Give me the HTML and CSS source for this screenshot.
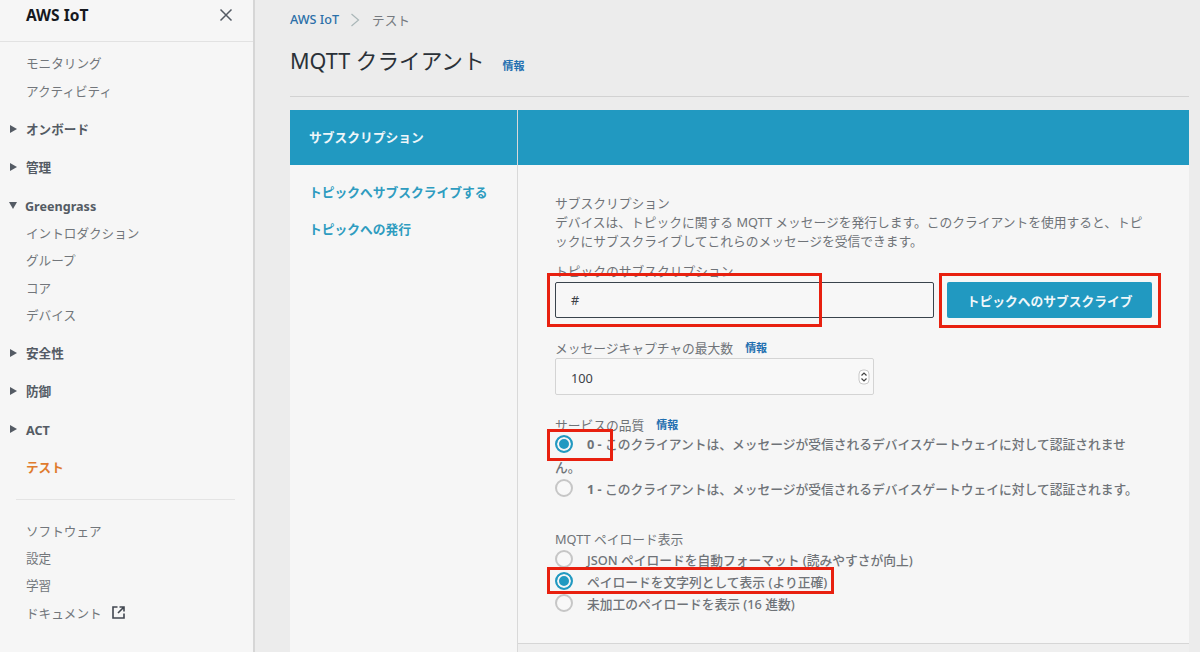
FILE: index.html
```html
<!DOCTYPE html>
<html lang="ja">
<head>
<meta charset="utf-8">
<title>MQTT クライアント</title>
<link rel="stylesheet" href="styles.css">
</head>
<body>
<div class="app">
  <aside class="sidebar">
    <div class="side-head">
      <span class="side-title">AWS IoT</span>
      <svg class="close" width="14" height="14" viewBox="0 0 14 14"><path d="M1.500 1.500l11 11M12.500 1.500l-11 11" stroke="#545b64" stroke-width="1.500" fill="none"/></svg>
    </div>
    <nav class="side-nav">
      <a class="item">モニタリング</a>
      <a class="item">アクティビティ</a>
      <a class="group g-sec"><span class="tri-r"></span>オンボード</a>
      <a class="group g-sec"><span class="tri-r"></span>管理</a>
      <a class="group g-sec"><span class="tri-d"></span><span class="latin">Greengrass</span></a>
      <a class="item">イントロダクション</a>
      <a class="item">グループ</a>
      <a class="item">コア</a>
      <a class="item">デバイス</a>
      <a class="group g-sec"><span class="tri-r"></span>安全性</a>
      <a class="group g-sec"><span class="tri-r"></span>防御</a>
      <a class="group g-sec"><span class="tri-r"></span><span class="latin">ACT</span></a>
      <a class="item active">テスト</a>
      <div class="side-div"></div>
      <a class="item">ソフトウェア</a>
      <a class="item">設定</a>
      <a class="item">学習</a>
      <a class="item">ドキュメント<svg class="ext" width="13" height="13" viewBox="0 0 13 13"><path d="M5.500 1H1v11h11V7.500M7.500 1H12v4.500M12 1L6 7" stroke="#414750" stroke-width="1.600" fill="none"/></svg></a>
    </nav>
  </aside>
  <main class="main">
    <div class="crumbs"><a class="crumb-link">AWS IoT</a><svg class="crumb-sep" width="10" height="14" viewBox="0 0 10 14"><path d="M1.500 1l7 6-7 6" stroke="#aab7b8" stroke-width="1.200" fill="none"/></svg><span class="crumb-cur">テスト</span></div>
    <div class="title-row"><h1 class="title">MQTT クライアント</h1><a class="info info-title">情報</a></div>
    <div class="panel">
      <div class="panel-left">
        <div class="left-head">サブスクリプション</div>
        <div class="left-links">
          <a class="left-link">トピックへサブスクライブする</a>
          <a class="left-link">トピックへの発行</a>
        </div>
      </div>
      <div class="panel-right">
        <div class="right-head"></div>
        <div class="form">
          <div class="f-title">サブスクリプション</div>
          <p class="f-desc">デバイスは、トピックに関する MQTT メッセージを発行します。このクライアントを使用すると、トピックにサブスクライブしてこれらのメッセージを受信できます。</p>
          <div class="f-label l-topic">トピックのサブスクリプション</div>
          <div class="topic-row">
            <div class="input topic-input">#<span class="mark m-input"></span></div>
            <div class="btn">トピックへのサブスクライブ<span class="mark m-btn"></span></div>
          </div>
          <div class="f-label l-max">メッセージキャプチャの最大数<a class="info">情報</a></div>
          <div class="input num-input">100
            <svg class="spin" width="12" height="16" viewBox="0 0 12 16"><rect x="1" y="1" width="10" height="14" rx="4" fill="#fff" stroke="#c9c9c9"/><path d="M3.500 6.500L6 4l2.500 2.500M3.500 9.500L6 12l2.500-2.500" stroke="#444" stroke-width="1.200" fill="none"/></svg>
          </div>
          <div class="f-label l-qos">サービスの品質<a class="info">情報</a></div>
          <div class="radio-wrap q0">
            <span class="radio on"></span><span class="r-text"><b>0 - </b>このクライアントは、メッセージが受信されるデバイスゲートウェイに対して認証されません。</span><span class="mark m-r0"></span>
          </div>
          <div class="radio-row q1"><span class="radio"></span><span class="r-text"><b>1 - </b>このクライアントは、メッセージが受信されるデバイスゲートウェイに対して認証されます。</span></div>
          <div class="f-label l-payload">MQTT ペイロード表示</div>
          <div class="radio-row p-row"><span class="radio"></span><span class="r-text">JSON ペイロードを自動フォーマット (読みやすさが向上)</span></div>
          <div class="radio-row p-row"><span class="radio on"></span><span class="r-text">ペイロードを文字列として表示 (より正確)</span><span class="mark m-r1"></span></div>
          <div class="radio-row p-row"><span class="radio"></span><span class="r-text">未加工のペイロードを表示 (16 進数)</span></div>
        </div>
        <div class="right-foot"></div>
      </div>
    </div>
  </main>
</div>
</body>
</html>
```

FILE: styles.css
```css
* { box-sizing: border-box; }
html, body { margin: 0; padding: 0; height: 652px; overflow: hidden; }
body { font-family: "Noto Sans", "Noto Sans CJK JP", sans-serif; font-size: 12.6px; color: #6b6f74; background: #ececec; }
.app { display: flex; height: 652px; overflow: hidden; }

.sidebar { width: 255px; flex: none; background: #f6f6f6; border-right: 2px solid #d6d6d6; }
.side-head { height: 42px; display: flex; align-items: center; justify-content: space-between; padding: 0 20px 11px 26px; border-bottom: 1px solid #e2e2e2; }
.side-title { font-size: 15.500px; font-weight: 700; color: #16191f; }
.side-nav { display: flex; flex-direction: column; padding-top: 7.300px; }
.item { display: flex; align-items: center; height: 27.300px; padding-left: 26px; color: #72767b; }
.group { display: flex; align-items: center; height: 27.300px; padding-left: 10px; font-weight: 700; color: #545b64; }
.g-sec { margin-top: 11px; }
.latin { padding-top: 3px; }
.tri-r { width: 0; height: 0; border-left: 7px solid #545b64; border-top: 4.500px solid transparent; border-bottom: 4.500px solid transparent; margin-right: 9px; }
.tri-d { width: 0; height: 0; border-top: 7px solid #545b64; border-left: 4.500px solid transparent; border-right: 4.500px solid transparent; margin-right: 8px; margin-left: -1px; }
.active { color: #e07b2e; font-weight: 700; margin-top: 10px; }
.side-div { height: 1px; background: #e4e4e4; margin: 18.700px 18px 16.800px 16px; }
.ext { margin-left: 10px; }

.main { flex: 1; padding: 0 11px 0 35px; min-width: 0; }
.crumbs { display: flex; align-items: center; height: 39px; }
.crumb-link { color: #2a6fa8; font-weight: 500; }
.crumb-sep { margin: 0 12px 0 11px; }
.crumb-cur { color: #767a7f; }
.title-row { display: flex; align-items: center; height: 58px; border-bottom: 1px solid #d2d2d2; padding-bottom: 14px; margin-bottom: 13px; }
.title { margin: 0; font-size: 21.600px; font-weight: 400; color: #2a3138; line-height: 1.2; }
.info { color: #1f6fb0; font-size: 11px; font-weight: 700; margin-left: 13px; }
.info-title { margin-left: 18px; margin-top: 9px; }

.panel { display: flex; width: 899px; height: 542px; overflow: hidden; background: #f6f6f6; font-size: 12.750px; }
.panel-left { width: 227px; flex: none; }
.left-head { height: 55px; background: #2199c1; color: #eef6f9; font-weight: 700; display: flex; align-items: center; padding: 0 0 3px 19px; }
.left-links { display: flex; flex-direction: column; padding: 18px 0 0 19px; gap: 18px; }
.left-link { color: #2e9cc0; font-weight: 700; line-height: 19px; }
.panel-right { flex: 1; min-width: 0; display: flex; flex-direction: column; border-left: 1px solid #d9d9d9; }
.right-head { height: 55px; background: #2199c1; flex: none; }
.form { padding: 29px 37px 0 37px; height: 478px; color: #6f7378; }
.f-title { line-height: 19px; }
.f-desc { margin: 0; line-height: 19px; width: 598px; }
.f-label { line-height: 18px; display: flex; align-items: center; }
.f-label .info { margin-left: 12px; }
.l-topic { margin-top: 13px; height: 14px; }
.topic-row { display: flex; margin-top: 4px; align-items: stretch; gap: 13px; }
.input { position: relative; display: flex; align-items: center; padding-left: 15px; color: #3c4147; }
.topic-input { width: 380px; height: 36px; border: 1px solid #39434c; border-radius: 2px; background: #f7f7f7; }
.btn { position: relative; width: 205px; height: 36px; background: #2199c1; border-radius: 2px; color: #f0f7fa; font-weight: 700; display: flex; align-items: center; justify-content: center; }
.l-max { margin-top: 21px; height: 18px; }
.num-input { margin-top: 1px; width: 319px; height: 37px; border: 1px solid #d4d4d4; border-radius: 2px; background: #f8f8f8; justify-content: space-between; padding: 3px 3px 0 15px; }
.spin { margin-top: -3px; }
.l-qos { margin-top: 21px; height: 18px; }
.radio-wrap { position: relative; display: block; line-height: 23px; width: 585px; margin-top: -1px; }
.radio-wrap .radio { margin-right: 14px; vertical-align: -4px; }
.radio-row { position: relative; display: flex; align-items: center; }
.radio { display: inline-block; width: 18px; height: 18px; flex: none; border: 2px solid #c6c6c6; border-radius: 50%; background: #f8f8f8; margin-right: 14px; }
.radio.on { border-color: #2199c1; background: #2199c1; box-shadow: inset 0 0 0 2px #f6f6f6; }
.r-text { font-weight: 500; }
.r-text b { font-weight: 700; }
.q1 { height: 22px; margin-top: -2px; }
.l-payload { margin-top: 31px; }
.p-row { height: 22px; }
.right-foot { flex: 1; background: #efefef; border-top: 1px solid #d6d6d6; }

.mark { position: absolute; border: 3px solid #e8200f; pointer-events: none; }
.m-input { left: -9px; top: -10px; width: 275px; height: 54px; }
.m-btn { left: -8px; top: -9px; width: 222px; height: 55px; }
.m-r0 { left: -8px; top: -4px; width: 66px; height: 32px; }
.m-r1 { left: -8px; top: -3px; width: 287px; height: 27px; }
```
